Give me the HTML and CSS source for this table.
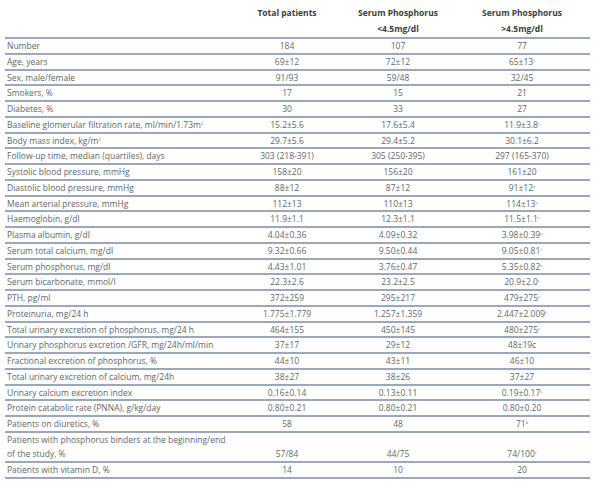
FILE: index.html
```
<!DOCTYPE html>
<html>
<head>
<meta charset="utf-8">
<link rel="stylesheet" href="styles.css">
</head>
<body>
<table class="tbl">
<colgroup><col class="c0"><col class="c1"><col class="c2"><col class="c3"></colgroup>
<thead>
<tr><th></th><th class="top">Total patients</th><th>Serum Phosphorus<br>&lt;4.5mg/dl</th><th>Serum Phosphorus<br>&gt;4.5mg/dl</th></tr>
</thead>
<tbody>
<tr><td>Number</td><td>184</td><td>107</td><td>77</td></tr>
<tr><td>Age, years</td><td>69±12</td><td>72±12</td><td>65±13<sup>c</sup></td></tr>
<tr><td>Sex, male/female</td><td>91/93</td><td>59/48</td><td>32/45</td></tr>
<tr><td>Smokers, %</td><td>17</td><td>15</td><td>21</td></tr>
<tr><td>Diabetes, %</td><td>30</td><td>33</td><td>27</td></tr>
<tr><td>Baseline glomerular filtration rate, ml/min/1.73m<sup>2</sup></td><td>15.2±5.6</td><td>17.6±5.4</td><td>11.9±3.8<sup>c</sup></td></tr>
<tr><td>Body mass index, kg/m<sup>2</sup></td><td>29.7±5.6</td><td>29.4±5.2</td><td>30.1±6.2</td></tr>
<tr><td>Follow-up time, median (quartiles), days</td><td>303 (218-391)</td><td>305 (250-395)</td><td>297 (165-370)</td></tr>
<tr><td>Systolic blood pressure, mmHg</td><td>158±20</td><td>156±20</td><td>161±20</td></tr>
<tr><td>Diastolic blood pressure, mmHg</td><td>88±12</td><td>87±12</td><td>91±12<sup>a</sup></td></tr>
<tr><td>Mean arterial pressure, mmHg</td><td>112±13</td><td>110±13</td><td>114±13<sup>a</sup></td></tr>
<tr><td>Haemoglobin, g/dl</td><td>11.9±1.1</td><td>12.3±1.1</td><td>11.5±1.1<sup>c</sup></td></tr>
<tr><td>Plasma albumin, g/dl</td><td>4.04±0.36</td><td>4.09±0.32</td><td>3.98±0.39<sup>a</sup></td></tr>
<tr><td>Serum total calcium, mg/dl</td><td>9.32±0.66</td><td>9.50±0.44</td><td>9.05±0.81<sup>c</sup></td></tr>
<tr><td>Serum phosphorus, mg/dl</td><td>4.43±1.01</td><td>3.76±0.47</td><td>5.35±0.82<sup>c</sup></td></tr>
<tr><td>Serum bicarbonate, mmol/l</td><td>22.3±2.6</td><td>23.2±2.5</td><td>20.9±2.0<sup>c</sup></td></tr>
<tr><td>PTH, pg/ml</td><td>372±259</td><td>295±217</td><td>479±275<sup>c</sup></td></tr>
<tr><td>Proteinuria, mg/24 h</td><td>1.775±1.779</td><td>1.257±1.359</td><td>2.447±2.009<sup>c</sup></td></tr>
<tr><td>Total urinary excretion of phosphorus, mg/24 h</td><td>464±155</td><td>450±145</td><td>480±275<sup>c</sup></td></tr>
<tr><td>Urinary phosphorus excretion /GFR, mg/24h/ml/min</td><td>37±17</td><td>29±12</td><td>48±19c</td></tr>
<tr><td>Fractional excretion of phosphorus, %</td><td>44±10</td><td>43±11</td><td>46±10</td></tr>
<tr><td>Total urinary excretion of calcium, mg/24h</td><td>38±27</td><td>38±26</td><td>37±27</td></tr>
<tr><td>Urinary calcium excretion index</td><td>0.16±0.14</td><td>0.13±0.11</td><td>0.19±0.17<sup>c</sup></td></tr>
<tr><td>Protein catabolic rate (PNNA), g/kg/day</td><td>0.80±0.21</td><td>0.80±0.21</td><td>0.80±0.20</td></tr>
<tr><td>Patients on diuretics, %</td><td>58</td><td>48</td><td>71<sup>b</sup></td></tr>
<tr class="dbl"><td>Patients with phosphorus binders at the beginning/end<br>of the study, %</td><td>57/84</td><td>44/75</td><td>74/100<sup>c</sup></td></tr>
<tr><td>Patients with vitamin D, %</td><td>14</td><td>10</td><td>20</td></tr>
</tbody>
</table>
</body>
</html>
```
FILE: styles.css
```
html, body {
  margin: 0;
  padding: 0;
  background: #ffffff;
}
body {
  width: 600px;
  height: 482px;
  overflow: hidden;
}
.tbl {
  margin-left: 5px;
  width: 585px;
  border-collapse: collapse;
  table-layout: fixed;
  font-family: "Open Sans", "Noto Sans", sans-serif;
  font-size: 8.5px;
  color: #62676b;
}
.c0 { width: 227px; }
.c1 { width: 110px; }
.c2 { width: 112px; }
.c3 { width: 136px; }
.tbl th {
  font-weight: bold;
  color: #3a3d40;
  font-size: 8.5px;
  line-height: 16px;
  padding: 5px 0 0;
  height: 32px;
  text-align: center;
  vertical-align: top;
}
.tbl td {
  padding: 0;
  height: 13.75px;
  line-height: 13.75px;
  text-align: center;
  white-space: nowrap;
  border-top: 2px solid #9ba8ba;
}
.tbl td:first-child {
  text-align: left;
  padding-left: 2px;
}
.tbl tbody tr:last-child td {
  border-bottom: 2px solid #9ba8ba;
}
.tbl .dbl td {
  height: 27.5px;
  vertical-align: bottom;
}
.tbl .dbl td:first-child {
  line-height: 14px;
  white-space: normal;
}
.tbl sup {
  font-size: 4px;
  line-height: 0;
  vertical-align: 3px;
}
```
